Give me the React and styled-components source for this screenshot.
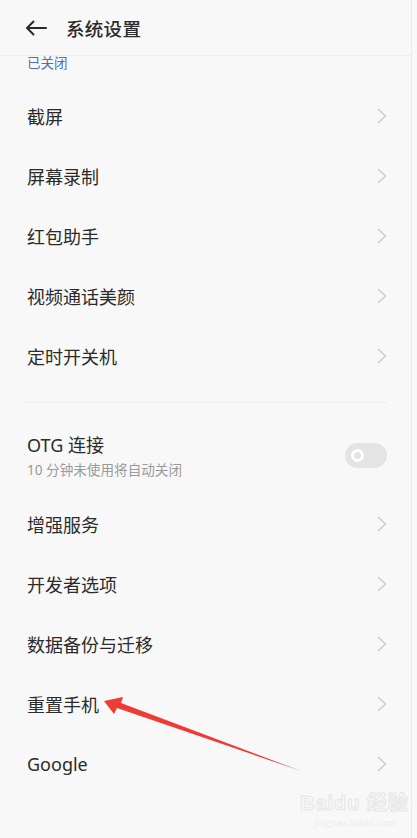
import React from 'react';
import styled, { createGlobalStyle } from 'styled-components';

const GlobalStyle = createGlobalStyle`
    html, body {
        margin: 0;
        padding: 0;
        background-color: #f8f8f8;
    }
    body {
        font-family: "Noto Sans", "Noto Sans CJK SC", sans-serif;
        color: #2b2b2b;
    }
`;

const Screen = styled.div`
    position: relative;
    width: 411px;
    min-height: 838px;
    background-color: #f8f8f8;
    border-right: 1px solid #ebebeb;
    overflow: hidden;
`;

const Header = styled.div`
    height: 55px;
    display: flex;
    align-items: center;
    padding-left: 25px;
    border-bottom: 1px solid #eeeeee;
`;

const Title = styled.h1`
    margin: 0 0 0 19px;
    font-size: 18.5px;
    font-weight: 500;
    color: #2b2b2b;
    letter-spacing: 0.3px;
`;

const StatusTail = styled.div`
    height: 30px;
    padding-left: 27px;
    font-size: 13.5px;
    line-height: 14px;
    color: #4a6fbf;
`;

const Row = styled.div`
    height: 60px;
    display: flex;
    align-items: center;
    justify-content: space-between;
    padding: 0 24px 0 27px;
`;

const Label = styled.span`
    font-size: 18px;
    color: #2b2b2b;
`;

const Divider = styled.div`
    height: 1px;
    margin: 16px 24px 0 24px;
    background-color: #ececec;
`;

const ToggleRow = styled.div`
    display: flex;
    align-items: center;
    justify-content: space-between;
    padding: 30px 24px 15px 27px;
`;

const TextStack = styled.div`
    display: flex;
    flex-direction: column;
    gap: 4px;
`;

const LabelLine = styled.span`
    font-size: 18px;
    line-height: 24px;
    color: #2b2b2b;
`;

const Hint = styled.span`
    font-size: 13.6px;
    line-height: 18px;
    color: #9a9a9a;
`;

const Switch = styled.div`
    width: 42px;
    height: 25px;
    margin-top: -2px;
    border-radius: 13px;
    background-color: #e4e4e4;
    display: flex;
    align-items: center;
    padding-left: 6px;
    box-sizing: border-box;
`;

const Knob = styled.div`
    width: 13px;
    height: 13px;
    border-radius: 50%;
    box-sizing: border-box;
    border: 3px solid #ffffff;
    background-color: #e4e4e4;
`;

const Arrow = styled.svg`
    position: absolute;
    left: 0;
    top: 0;
    pointer-events: none;
`;

const Watermark = styled.div`
    position: absolute;
    left: 300px;
    top: 787px;
    display: flex;
    flex-direction: column;
    align-items: center;
    font-family: "Liberation Serif", serif;
`;

const MarkTop = styled.span`
    font-family: "Liberation Sans", "Noto Sans CJK SC", sans-serif;
    font-size: 20px;
    font-weight: bold;
    letter-spacing: 1px;
    color: #fbfbfb;
    -webkit-text-stroke: 1px #e6e6e6;
`;

const MarkBottom = styled.span`
    font-size: 11px;
    color: #ececec;
`;

const BackIcon = () => (
    <svg width="22" height="16" viewBox="0 0 22 16">
        <path d="M21 8H2M8.5 1.5L2 8l6.5 6.5" fill="none" stroke="#2b2b2b" strokeWidth="2" strokeLinecap="round" strokeLinejoin="round" />
    </svg>
);

const Chevron = () => (
    <svg width="10" height="16" viewBox="0 0 10 16">
        <path d="M1.5 1.5L8.5 8l-7 6.5" fill="none" stroke="#cfcfcf" strokeWidth="1.6" strokeLinecap="round" strokeLinejoin="round" />
    </svg>
);

const topItems = ['截屏', '屏幕录制', '红包助手', '视频通话美颜', '定时开关机'];
const bottomItems = ['增强服务', '开发者选项', '数据备份与迁移', '重置手机', 'Google'];

export default function App() {
    return (
        <Screen>
            <GlobalStyle />
            <Header>
                <BackIcon />
                <Title>系统设置</Title>
            </Header>
            <StatusTail>已关闭</StatusTail>
            {topItems.map((item) => (
                <Row key={item}>
                    <Label>{item}</Label>
                    <Chevron />
                </Row>
            ))}
            <Divider />
            <ToggleRow>
                <TextStack>
                    <LabelLine>OTG 连接</LabelLine>
                    <Hint>10 分钟未使用将自动关闭</Hint>
                </TextStack>
                <Switch>
                    <Knob />
                </Switch>
            </ToggleRow>
            {bottomItems.map((item) => (
                <Row key={item}>
                    <Label>{item}</Label>
                    <Chevron />
                </Row>
            ))}
            <Watermark>
                <MarkTop>Baidu 经验</MarkTop>
                <MarkBottom>jingyan.baidu.com</MarkBottom>
            </Watermark>
            <Arrow width="417" height="838" viewBox="0 0 417 838">
                <polygon points="104,701 123,697 121,703 301,771 117,708 114,714" fill="#ee3b36" />
            </Arrow>
        </Screen>
    );
}
